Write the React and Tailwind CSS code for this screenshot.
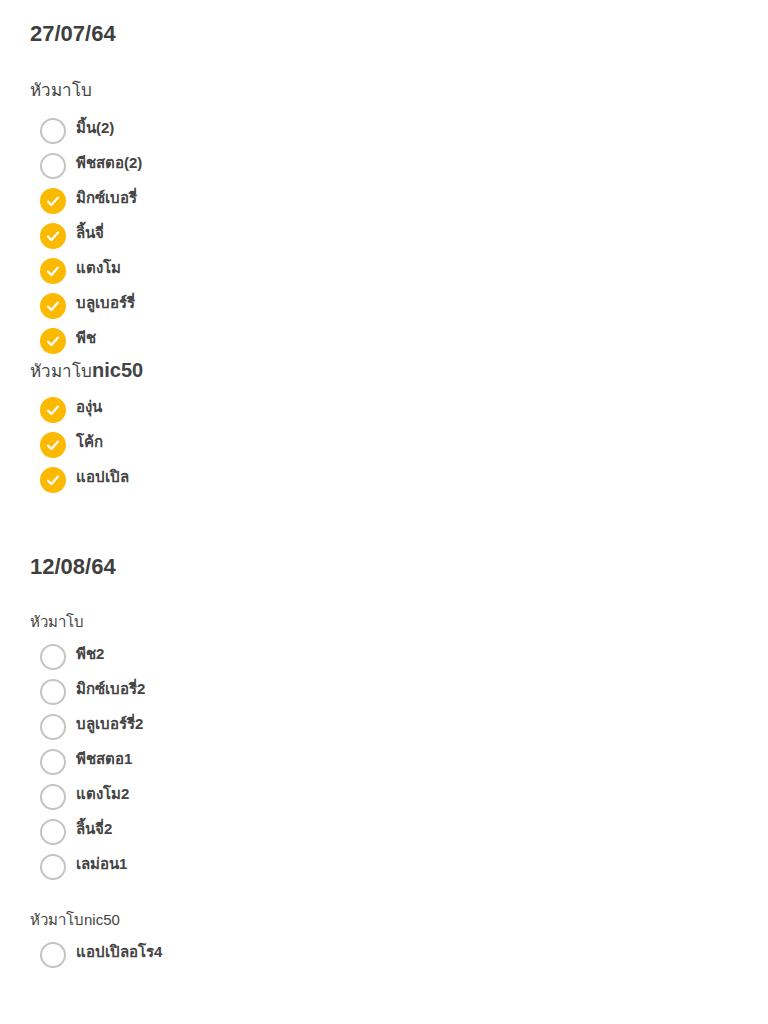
import React from 'react';

const sections = [
  {
    date: '27/07/64',
    groups: [
      {
        label: 'หัวมาโบ',
        items: [
          { name: 'มิ้น(2)', done: false },
          { name: 'พีชสตอ(2)', done: false },
          { name: 'มิกซ์เบอรี่', done: true },
          { name: 'ลิ้นจี่', done: true },
          { name: 'แตงโม', done: true },
          { name: 'บลูเบอร์รี่', done: true },
          { name: 'พีช', done: true },
        ],
      },
      {
        label: 'หัวมาโบ',
        items: [
          { name: 'องุ่น', done: true },
          { name: 'โค้ก', done: true },
          { name: 'แอปเปิล', done: true },
        ],
      },
    ],
  },
  {
    date: '12/08/64',
    groups: [
      {
        label: 'หัวมาโบ',
        items: [
          { name: 'พีช2', done: false },
          { name: 'มิกซ์เบอรี่2', done: false },
          { name: 'บลูเบอร์รี่2', done: false },
          { name: 'พีชสตอ1', done: false },
          { name: 'แตงโม2', done: false },
          { name: 'ลิ้นจี่2', done: false },
          { name: 'เลม่อน1', done: false },
        ],
      },
      {
        label: 'หัวมาโบnic50',
        items: [{ name: 'แอปเปิลอโร4', done: false }],
      },
    ],
  },
];

function Check({ done }) {
  if (!done) {
    return <span className="block h-[26px] w-[26px] shrink-0 rounded-full border-2 border-[#c4c4c4] bg-white" />;
  }
  return (
    <span className="flex h-[26px] w-[26px] shrink-0 items-center justify-center rounded-full bg-[#fbb900]">
      <svg width="16" height="16" viewBox="0 0 16 16" fill="none">
        <path d="M3 8.6 L6.4 12 L13 4.6" stroke="white" strokeWidth="2.3" strokeLinecap="round" strokeLinejoin="round" />
      </svg>
    </span>
  );
}

function Row({ item }) {
  return (
    <div className="flex h-[35px] items-start gap-[10px] pl-[10px] pt-[5px]">
      <Check done={item.done} />
      <span className="text-[15px] font-semibold leading-[20px] text-[#444]">{item.name}</span>
    </div>
  );
}

export default function App() {
  return (
    <div className="min-h-[1024px] bg-white px-[30px] pt-[22px] text-[#444]" style={{ fontFamily: '"Liberation Sans", "Noto Sans", sans-serif' }}>
      {/* section 1 */}
      <h2 className="text-[22px] font-bold leading-[24px] text-[#3f3f3f]">{sections[0].date}</h2>
      <p className="mt-[33px] text-[17px] leading-[24px]">{sections[0].groups[0].label}</p>
      <div className="mt-[10px]">
        {sections[0].groups[0].items.map(it => <Row key={it.name} item={it} />)}
      </div>
      <p className="text-[17px] leading-[24px]">
        {sections[0].groups[1].label}<span className="text-[20px] font-bold">nic50</span>
      </p>
      <div className="mt-[8px]">
        {sections[0].groups[1].items.map(it => <Row key={it.name} item={it} />)}
      </div>

      {/* section 2 */}
      <h2 className="mt-[58px] text-[22px] font-bold leading-[24px] text-[#3f3f3f]">{sections[1].date}</h2>
      <p className="mt-[33px] text-[15px] leading-[20px]">{sections[1].groups[0].label}</p>
      <div className="mt-[7px]">
        {sections[1].groups[0].items.map(it => <Row key={it.name} item={it} />)}
      </div>
      <p className="mt-[26px] text-[15px] leading-[20px]">{sections[1].groups[1].label}</p>
      <div className="mt-[7px]">
        {sections[1].groups[1].items.map(it => <Row key={it.name} item={it} />)}
      </div>
    </div>
  );
}
